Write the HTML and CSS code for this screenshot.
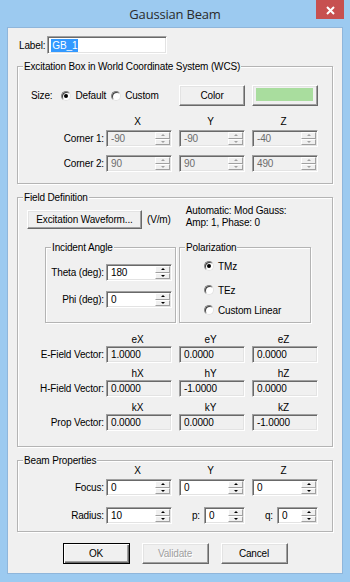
FILE: index.html
```html
<!DOCTYPE html>
<html lang="en">
  <head>
    <meta charset="UTF-8" />
    <meta name="viewport" content="width=device-width, initial-scale=1.0" />
    <title>Gaussian Beam</title>
    <link rel="stylesheet" href="styles.css">
  </head>
  <body>
    <div class="window">
      <div class="titlebar">
        <span class="title">Gaussian Beam</span>
        <div class="close">
          <svg width="28" height="19" viewBox="0 0 28 19">
            <path d="M11 7 L18 14 M18 7 L11 14" stroke="#fff" stroke-width="2" fill="none" />
          </svg>
        </div>
      </div>

      <div class="client">
        <div class="label-row">
          <span class="label-text">Label:</span>
          <div class="edit label-edit"><span class="sel">GB_1</span></div>
        </div>

        <!-- excitation box -->
        <div class="group wcs">
          <span class="group-title">Excitation Box in World Coordinate System (WCS)</span>
          <div class="size-row">
            <div class="size-choice">
              <span class="size-label">Size:</span>
              <span class="radio checked"></span>
              <span class="radio-text">Default</span>
              <span class="radio"></span>
              <span class="radio-text">Custom</span>
            </div>
            <div class="button color-btn">Color</div>
            <div class="button swatch"><span class="swatch-fill"></span></div>
          </div>
          <div class="row heads">
            <span class="row-label"></span>
            <span class="head">X</span>
            <span class="head">Y</span>
            <span class="head">Z</span>
          </div>
          <div class="row corner">
            <span class="row-label">Corner 1:</span>
            <div class="edit spin disabled"><span class="value">-90</span><span class="arrows"><span class="arrow up"></span><span class="arrow down"></span></span></div>
            <div class="edit spin disabled"><span class="value">-90</span><span class="arrows"><span class="arrow up"></span><span class="arrow down"></span></span></div>
            <div class="edit spin disabled"><span class="value">-40</span><span class="arrows"><span class="arrow up"></span><span class="arrow down"></span></span></div>
          </div>
          <div class="row corner second">
            <span class="row-label">Corner 2:</span>
            <div class="edit spin disabled"><span class="value">90</span><span class="arrows"><span class="arrow up"></span><span class="arrow down"></span></span></div>
            <div class="edit spin disabled"><span class="value">90</span><span class="arrows"><span class="arrow up"></span><span class="arrow down"></span></span></div>
            <div class="edit spin disabled"><span class="value">490</span><span class="arrows"><span class="arrow up"></span><span class="arrow down"></span></span></div>
          </div>
        </div>

        <!-- field definition -->
        <div class="group field">
          <span class="group-title">Field Definition</span>
          <div class="waveform-row">
            <div class="button waveform-btn">Excitation Waveform...</div>
            <span class="unit">(V/m)</span>
            <div class="auto-info">
              <div>Automatic: Mod Gauss:</div>
              <div>Amp: 1, Phase: 0</div>
            </div>
          </div>

          <div class="sub-groups">
            <div class="group incident">
              <span class="group-title">Incident Angle</span>
              <div class="angle-row">
                <span class="angle-label">Theta (deg):</span>
                <div class="edit spin"><span class="value">180</span><span class="arrows"><span class="arrow up"></span><span class="arrow down"></span></span></div>
              </div>
              <div class="angle-row phi">
                <span class="angle-label">Phi (deg):</span>
                <div class="edit spin"><span class="value">0</span><span class="arrows"><span class="arrow up"></span><span class="arrow down"></span></span></div>
              </div>
            </div>
            <div class="group polarization">
              <span class="group-title">Polarization</span>
              <div class="pol-row"><span class="radio checked"></span><span class="radio-text">TMz</span></div>
              <div class="pol-row tez"><span class="radio"></span><span class="radio-text">TEz</span></div>
              <div class="pol-row custom"><span class="radio"></span><span class="radio-text">Custom Linear</span></div>
            </div>
          </div>

          <div class="vectors">
            <div class="row heads vec-heads">
              <span class="row-label"></span>
              <span class="head">eX</span>
              <span class="head">eY</span>
              <span class="head">eZ</span>
            </div>
            <div class="row">
              <span class="row-label">E-Field Vector:</span>
              <div class="edit readonly"><span class="value">1.0000</span></div>
              <div class="edit readonly"><span class="value">0.0000</span></div>
              <div class="edit readonly"><span class="value">0.0000</span></div>
            </div>
            <div class="row heads vec-heads next">
              <span class="row-label"></span>
              <span class="head">hX</span>
              <span class="head">hY</span>
              <span class="head">hZ</span>
            </div>
            <div class="row">
              <span class="row-label">H-Field Vector:</span>
              <div class="edit readonly"><span class="value">0.0000</span></div>
              <div class="edit readonly"><span class="value">-1.0000</span></div>
              <div class="edit readonly"><span class="value">0.0000</span></div>
            </div>
            <div class="row heads vec-heads next">
              <span class="row-label"></span>
              <span class="head">kX</span>
              <span class="head">kY</span>
              <span class="head">kZ</span>
            </div>
            <div class="row">
              <span class="row-label">Prop Vector:</span>
              <div class="edit readonly"><span class="value">0.0000</span></div>
              <div class="edit readonly"><span class="value">0.0000</span></div>
              <div class="edit readonly"><span class="value">-1.0000</span></div>
            </div>
          </div>
        </div>

        <!-- beam properties -->
        <div class="group beam">
          <span class="group-title">Beam Properties</span>
          <div class="row heads">
            <span class="row-label"></span>
            <span class="head">X</span>
            <span class="head">Y</span>
            <span class="head">Z</span>
          </div>
          <div class="row focus">
            <span class="row-label">Focus:</span>
            <div class="edit spin"><span class="value">0</span><span class="arrows"><span class="arrow up"></span><span class="arrow down"></span></span></div>
            <div class="edit spin"><span class="value">0</span><span class="arrows"><span class="arrow up"></span><span class="arrow down"></span></span></div>
            <div class="edit spin"><span class="value">0</span><span class="arrows"><span class="arrow up"></span><span class="arrow down"></span></span></div>
          </div>
          <div class="row radius">
            <span class="row-label">Radius:</span>
            <div class="edit spin"><span class="value">10</span><span class="arrows"><span class="arrow up"></span><span class="arrow down"></span></span></div>
            <span class="small-label">p:</span>
            <div class="edit spin small"><span class="value">0</span><span class="arrows"><span class="arrow up"></span><span class="arrow down"></span></span></div>
            <span class="small-label">q:</span>
            <div class="edit spin small"><span class="value">0</span><span class="arrows"><span class="arrow up"></span><span class="arrow down"></span></span></div>
          </div>
        </div>

        <div class="buttons">
          <div class="button dlg-btn default">OK</div>
          <div class="button dlg-btn disabled">Validate</div>
          <div class="button dlg-btn">Cancel</div>
        </div>
      </div>
    </div>
  </body>
</html>
```

FILE: styles.css
```css
body {
  margin: 0;
  padding: 0;
  font-family: "Liberation Sans", Arial, sans-serif;
  font-size: 10px;
  letter-spacing: -0.15px;
  color: #000;
}

.window {
  width: 350px;
  height: 582px;
  box-sizing: border-box;
  background: #9ccaf0;
  padding: 0 7px 8px;
  display: flex;
  flex-direction: column;
}

.titlebar {
  height: 28px;
  position: relative;
  display: flex;
  align-items: center;
  justify-content: center;
}

.title {
  font-family: "Open Sans", sans-serif;
  font-size: 13px;
  letter-spacing: -0.2px;
  color: #2b2b2b;
}

.close {
  position: absolute;
  top: 0;
  right: -1px;
  width: 28px;
  height: 19px;
  background: #c75050;
}

.close svg {
  display: block;
}

.client {
  flex: 1;
  background: #f0f0f0;
  border: 1px solid #8fb6db;
  padding: 8px 9px 9px;
}

/* label */
.label-row {
  display: flex;
  align-items: center;
  height: 18px;
}

.label-text {
  margin-left: 2px;
  margin-right: 2px;
}

/* sunken edit boxes */
.edit {
  box-sizing: border-box;
  height: 17px;
  width: 66px;
  background: #fff;
  border: 1px solid;
  border-color: #a0a0a0 #fff #fff #a0a0a0;
  box-shadow: inset 1px 1px 0 #696969, inset -1px -1px 0 #e3e3e3;
  display: flex;
  align-items: center;
}

.edit .value {
  flex: 1;
  padding-left: 4px;
  line-height: 13px;
}

.label-edit {
  width: 120px;
  height: 18px;
  padding-left: 3px;
}

.sel {
  background: #3399ff;
  color: #fff;
  padding: 0 1px;
  line-height: 13px;
}

.edit.disabled {
  background: #f0f0f0;
  color: #6d6d6d;
}

.edit.readonly {
  background: #f0f0f0;
}

.arrows {
  display: flex;
  flex-direction: column;
  width: 15px;
  height: 13px;
  margin: 1px 1px 1px 0;
}

.arrow {
  flex: 1;
  box-sizing: border-box;
  background: #f0f0f0;
  border: 1px solid;
  border-color: #fff #a0a0a0 #a0a0a0 #fff;
  display: flex;
  align-items: center;
  justify-content: center;
}

.arrow::before {
  content: "";
  width: 0;
  height: 0;
  border-left: 2px solid transparent;
  border-right: 2px solid transparent;
}

.arrow.up::before {
  border-bottom: 2px solid #000;
}

.arrow.down::before {
  border-top: 2px solid #000;
}

.disabled .arrow.up::before {
  border-bottom-color: #a0a0a0;
}

.disabled .arrow.down::before {
  border-top-color: #a0a0a0;
}

/* raised buttons */
.button {
  box-sizing: border-box;
  background: #f0f0f0;
  border: 1px solid;
  border-color: #fff #696969 #696969 #fff;
  box-shadow: inset -1px -1px 0 #a0a0a0, inset 1px 1px 0 #e3e3e3;
  display: flex;
  align-items: center;
  justify-content: center;
}

/* group boxes */
.group {
  position: relative;
  margin-top: 12px;
  border: 1px solid #b4b4b4;
  box-shadow: inset 1px 1px 0 #fff, 1px 1px 0 #fff;
}

.group-title {
  position: absolute;
  top: -7px;
  left: 5px;
  padding: 0 1px;
  line-height: 13px;
  background: #f0f0f0;
}

.wcs {
  padding: 18px 0 11px;
}

.size-row {
  display: flex;
  align-items: center;
  height: 21px;
}

.size-choice {
  width: 154px;
  margin-right: 7px;
  display: flex;
  align-items: center;
  padding-left: 13px;
  box-sizing: border-box;
}

.size-label {
  margin-right: 9px;
}

.radio {
  box-sizing: border-box;
  width: 10px;
  height: 10px;
  border-radius: 50%;
  background: #fff;
  border: 1px solid;
  border-color: #808080 #e3e3e3 #e3e3e3 #808080;
  box-shadow: inset 1px 1px 0 #404040;
  display: flex;
  align-items: center;
  justify-content: center;
  flex-shrink: 0;
}

.radio.checked::after {
  content: "";
  width: 4px;
  height: 4px;
  border-radius: 50%;
  background: #000;
}

.radio-text {
  margin-left: 4px;
  margin-right: 5px;
}

.color-btn {
  width: 66px;
  height: 21px;
  margin-right: 7px;
}

.swatch {
  width: 66px;
  height: 21px;
  padding: 2px 4px 4px 3px;
}

.swatch-fill {
  display: block;
  width: 100%;
  height: 100%;
  background: #a9dd9e;
}

.row {
  display: flex;
  align-items: center;
  height: 17px;
}

.row-label {
  width: 86px;
  margin-right: 2px;
  text-align: right;
  flex-shrink: 0;
}

.row .edit {
  margin-right: 7px;
}

.heads {
  height: 12px;
  margin-top: 10px;
  margin-bottom: 2px;
}

.head {
  width: 66px;
  margin-right: 7px;
  text-align: center;
  padding-right: 3px;
  box-sizing: border-box;
  line-height: 12px;
}

.corner.second {
  margin-top: 8px;
}

/* field definition */
.field {
  margin-top: 13px;
  padding: 12px 0 15px;
}

.waveform-row {
  display: flex;
  align-items: center;
  height: 19px;
}

.waveform-btn {
  width: 115px;
  height: 19px;
  margin-left: 9px;
}

.unit {
  margin-left: 5px;
}

.auto-info {
  margin-left: 15px;
  line-height: 12px;
  align-self: flex-start;
  margin-top: -5px;
}

.sub-groups {
  display: flex;
  margin-top: 18px;
  margin-left: 27px;
}

.sub-groups .group {
  margin-top: 0;
}

.incident {
  width: 131px;
  box-sizing: border-box;
  padding: 16px 0 14px;
}

.polarization {
  width: 132px;
  box-sizing: border-box;
  padding-top: 12px;
}

.group.polarization {
  margin-left: 3px;
}

.angle-row {
  display: flex;
  align-items: center;
  height: 17px;
}

.angle-row.phi {
  margin-top: 10px;
}

.angle-label {
  width: 58px;
  margin-right: 2px;
  text-align: right;
}

.pol-row {
  display: flex;
  align-items: center;
  height: 12px;
  padding-left: 24px;
}

.pol-row.tez {
  margin-top: 12px;
}

.pol-row.custom {
  margin-top: 8px;
}

.vectors {
  margin-top: 10px;
}

.vec-heads {
  height: 13px;
  margin-top: 0;
  margin-bottom: 0;
}

.vec-heads.next {
  margin-top: 4px;
}

.vec-heads .head {
  line-height: 13px;
}

/* beam properties */
.beam {
  margin-top: 13px;
  padding: 4px 0 7px;
}

.beam .heads {
  margin-top: 0;
}

.radius {
  margin-top: 11px;
}

.row .edit.small {
  width: 41px;
  margin-right: 0;
}

.small-label {
  width: 32px;
  padding-right: 4px;
  box-sizing: border-box;
  text-align: right;
  margin-left: -7px;
  margin-right: 0;
}

.small-label + .edit + .small-label {
  margin-left: 0;
}

/* dialog buttons */
.buttons {
  display: flex;
  justify-content: center;
  gap: 12px;
  margin-top: 11px;
}

.dlg-btn {
  width: 67px;
  height: 21px;
}

.dlg-btn.default {
  border: 1px solid #000;
  box-shadow: inset 1px 1px 0 #fff, inset -1px -1px 0 #696969, inset -2px -2px 0 #a0a0a0;
}

.dlg-btn.disabled {
  color: #a0a0a0;
  text-shadow: 1px 1px 0 #fff;
}
```
